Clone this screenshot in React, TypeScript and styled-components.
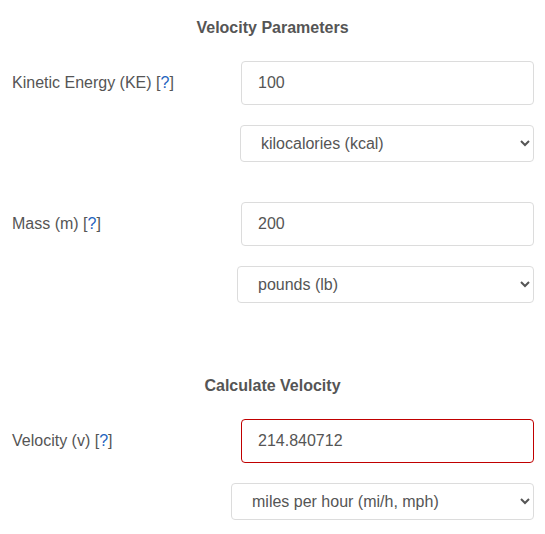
import React from "react";
import styled, { createGlobalStyle } from "styled-components";

const Global = createGlobalStyle`
  html, body { margin: 0; padding: 0; background: #fff; }
  body { font-family: "Liberation Sans", Arial, sans-serif; color: #555; }
`;

const Page = styled.div`
  width: 545px;
  padding: 19px 11px 0 12px;
  box-sizing: border-box;
`;

const Heading = styled.div<{ $top?: number }>`
  font-weight: bold;
  font-size: 16px;
  line-height: 18px;
  text-align: center;
  margin-top: ${(p) => p.$top ?? 0}px;
  margin-bottom: 24px;
  margin-left: -12px;
  margin-right: -11px;
  color: #555;
`;

const Group = styled.div<{ $gapAfter?: number }>`
  display: flex;
  flex-direction: column;
  gap: 20px;
  margin-bottom: ${(p) => p.$gapAfter ?? 0}px;
`;

const Row = styled.div`
  display: grid;
  grid-template-columns: 229px 1fr;
  align-items: center;
`;

const Label = styled.label`
  font-size: 16px;
  line-height: 18px;
  color: #555;
`;

const Help = styled.a`
  color: #1f64c0;
  text-decoration: none;
`;

const TextInput = styled.input<{ $error?: boolean }>`
  box-sizing: border-box;
  height: 44px;
  width: 100%;
  margin: 0;
  padding: 0 16px;
  border: 1px solid ${(p) => (p.$error ? "#c00000" : "#dcdcdc")};
  border-radius: 4px;
  font-family: "Liberation Sans", Arial, sans-serif;
  font-size: 16px;
  color: #555;
  background: #fff;
  outline: none;
`;

const SelectRow = styled.div`
  display: flex;
  justify-content: flex-end;
`;

const Select = styled.select`
  box-sizing: border-box;
  height: 37px;
  margin: 0;
  padding: 0 6px 0 16px;
  border: 1px solid #dcdcdc;
  border-radius: 4px;
  font-family: "Liberation Sans", Arial, sans-serif;
  font-size: 16px;
  color: #555;
  background: #fff;
  outline: none;
`;

export default function App() {
  return (
    <>
      <Global />
      <Page>
        <Heading>Velocity Parameters</Heading>
        <Group $gapAfter={40}>
          <Row>
            <Label>
              Kinetic Energy (KE) [<Help href="#">?</Help>]
            </Label>
            <TextInput defaultValue="100" />
          </Row>
          <SelectRow>
            <Select style={{ width: 294 }} defaultValue="kcal">
              <option value="kcal">kilocalories (kcal)</option>
            </Select>
          </SelectRow>
        </Group>
        <Group>
          <Row>
            <Label>
              Mass (m) [<Help href="#">?</Help>]
            </Label>
            <TextInput defaultValue="200" />
          </Row>
          <SelectRow>
            <Select style={{ width: 297 }} defaultValue="lb">
              <option value="lb">pounds (lb)</option>
            </Select>
          </SelectRow>
        </Group>
        <Heading $top={74}>Calculate Velocity</Heading>
        <Group>
          <Row>
            <Label>
              Velocity (v) [<Help href="#">?</Help>]
            </Label>
            <TextInput $error defaultValue="214.840712" />
          </Row>
          <SelectRow>
            <Select style={{ width: 303 }} defaultValue="mph">
              <option value="mph">miles per hour (mi/h, mph)</option>
            </Select>
          </SelectRow>
        </Group>
      </Page>
    </>
  );
}
